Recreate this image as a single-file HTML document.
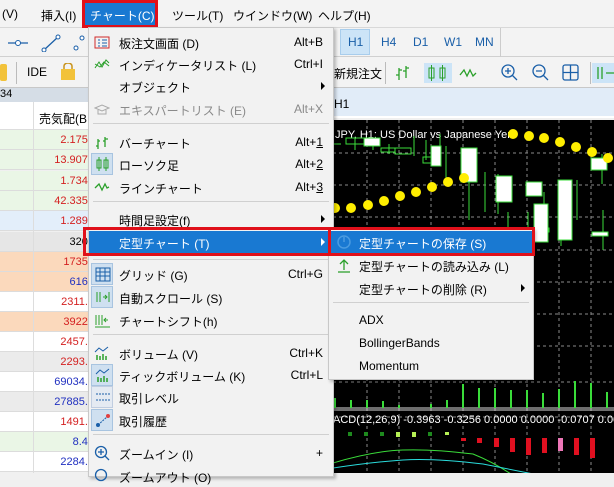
<!DOCTYPE html><html><head><meta charset="utf-8"><style>
*{margin:0;padding:0;box-sizing:border-box}
body{width:614px;height:473px;overflow:hidden;position:relative;background:#f0f0f0;font-family:"Liberation Sans","Noto Sans CJK JP",sans-serif;font-size:12px;color:#000}
.a{position:absolute}
.mb span{position:absolute;top:7px;font-size:12px}
.row{position:absolute;left:0;width:88px;height:20px;border-bottom:1px solid #dcdcdc;text-align:right;font-size:11px;padding-top:4px;overflow:hidden;white-space:nowrap}
.row i{font-style:normal;position:absolute;left:0;width:94px;text-align:right}
.menu{left:88px;top:27px;width:246px;height:450px;background:#f2f2f2;border:1px solid #c8c8c8;box-shadow:2px 2px 3px rgba(0,0,0,.25)}
.it{position:absolute;left:0;width:244px;height:22px;font-size:12px}
.it .t{position:absolute;left:30px;top:4px;white-space:nowrap}
.it .k{position:absolute;right:10px;top:4px}
.ar{position:absolute;right:8px;top:7px;width:0;height:0;border-left:4px solid #000;border-top:4px solid transparent;border-bottom:4px solid transparent}
.sep{position:absolute;left:4px;width:236px;height:1px;background:#d0d0d0}
.ic{position:absolute;left:5px;top:3px;width:16px;height:16px}
.sub{left:328px;top:228px;width:206px;height:152px;background:#f2f2f2;border:1px solid #c8c8c8;box-shadow:2px 2px 3px rgba(0,0,0,.25)}
.g{color:#8a8a8a}
.tb span{position:absolute;font-size:12px}
</style></head><body>
<!-- menu bar -->
<div class="a mb" style="left:0;top:0;width:614px;height:28px;background:#f3f3f3;border-bottom:1px solid #d8d8d8">
<span style="left:2px">(V)</span><span style="left:41px">挿入(I)</span><span style="left:172px">ツール(T)</span><span style="left:233px">ウインドウ(W)</span><span style="left:318px">ヘルプ(H)</span>
<div class="a" style="left:82px;top:0;width:76px;height:28px;border:3px solid #e0101a;background:#1979d2"></div>
<span style="left:90px;color:#fff">チャート(C)</span>
</div>
<!-- toolbar 1 -->
<div class="a tb" style="left:0;top:28px;width:614px;height:29px;background:#f3f3f3;border-bottom:1px solid #d0d0d0">
<svg class="a" style="left:0;top:6px" width="90" height="18"><path d="M8 9h20" stroke="#1a5fa8" stroke-width="1.3"/><circle cx="18" cy="9" r="2.5" fill="#fff" stroke="#1a5fa8"/><path d="M44 16L58 3" stroke="#1a5fa8" stroke-width="1.3"/><circle cx="44" cy="16" r="2" fill="#fff" stroke="#1a5fa8"/><circle cx="58" cy="3" r="2" fill="#fff" stroke="#1a5fa8"/><circle cx="76" cy="14" r="2" fill="#fff" stroke="#1a5fa8"/><circle cx="82" cy="4" r="2" fill="#fff" stroke="#1a5fa8"/></svg>
<div class="a" style="left:340px;top:1px;width:30px;height:26px;background:#cce4f7;border:1px solid #a8cdec"></div>
<span style="left:348px;top:7px;color:#1a5fa8">H1</span><span style="left:381px;top:7px;color:#1a5fa8">H4</span><span style="left:413px;top:7px;color:#1a5fa8">D1</span><span style="left:444px;top:7px;color:#1a5fa8">W1</span><span style="left:475px;top:7px;color:#1a5fa8">MN</span>
<div class="a" style="left:500px;top:0;width:1px;height:29px;background:#ccc"></div>
</div>
<!-- toolbar 2 -->
<div class="a tb" style="left:0;top:57px;width:614px;height:31px;background:#f3f3f3;border-bottom:1px solid #c8c8c8">
<div class="a" style="left:0;top:7px;width:7px;height:17px;background:#f2c23a;border-radius:2px"></div>
<div class="a" style="left:16px;top:5px;width:1px;height:22px;background:#bbb"></div>
<span style="left:27px;top:8px">IDE</span>
<svg class="a" style="left:60px;top:6px" width="16" height="18"><rect x="1" y="6" width="14" height="11" fill="#f2c23a"/><path d="M4 6V3a4 3 0 0 1 8 0v3" stroke="#c8921a" fill="none" stroke-width="1.5"/></svg>
<span style="left:334px;top:8px">新規注文</span>
<div class="a" style="left:385px;top:5px;width:1px;height:22px;background:#bbb"></div>
<svg class="a" style="left:395px;top:6px" width="220" height="20"><path d="M4 5v12M1 12h3M4 7h3M11 3v12M8 8h3M11 5h3" stroke="#2aa02a" stroke-width="1.3" fill="none"/><rect x="29" y="0" width="28" height="22" fill="#cce4f7"/><rect x="34" y="5" width="5" height="10" fill="none" stroke="#2aa02a"/><path d="M36.5 2v16M47.5 2v16" stroke="#2aa02a"/><rect x="45" y="5" width="5" height="10" fill="none" stroke="#2aa02a"/><path d="M65 12l4-5 3 6 3-6 3 6 3-3" stroke="#2aa02a" fill="none" stroke-width="1.3"/><circle cx="113" cy="8" r="6" fill="none" stroke="#1a5fa8" stroke-width="1.3"/><path d="M117 12l5 5M110 8h6M113 5v6" stroke="#1a5fa8" stroke-width="1.3"/><circle cx="144" cy="8" r="6" fill="none" stroke="#1a5fa8" stroke-width="1.3"/><path d="M148 12l5 5M141 8h6" stroke="#1a5fa8" stroke-width="1.3"/><rect x="168" y="2" width="15" height="15" rx="2" fill="none" stroke="#1a5fa8" stroke-width="1.3"/><path d="M175.5 2v15M168 9.5h15" stroke="#1a5fa8" stroke-width="1.3"/><rect x="197" y="0" width="25" height="22" fill="#cce4f7"/><path d="M203 4v12M207 4v12M211 10h8" stroke="#2aa02a" stroke-width="1.3"/></svg>
<div class="a" style="left:590px;top:5px;width:1px;height:22px;background:#bbb"></div>
</div>
<!-- left panel -->
<div class="a" style="left:0;top:88px;width:88px;height:14px;background:#d5dde6;font-size:11px;padding-left:0">34</div>
<div class="a" style="left:0;top:102px;width:88px;height:28px;background:#fff;border-bottom:1px solid #ddd"></div>
<div class="a" style="left:39px;top:110px;font-size:12px">売気配(B</div>
<div class="a" style="left:33px;top:102px;width:1px;height:371px;background:#ddd;z-index:2"></div>
<div class="row" style="top:130px;background:#eaf6e6;color:#d42020"><i>2.1754</i></div>
<div class="row" style="top:150px;background:#eaf6e6;color:#d42020"><i>13.9072</i></div>
<div class="row" style="top:171px;background:#eaf6e6;color:#d42020"><i>1.7342</i></div>
<div class="row" style="top:191px;background:#eaf6e6;color:#d42020"><i>42.3354</i></div>
<div class="row" style="top:211px;background:#e3eefa;color:#d42020"><i>1.2891</i></div>
<div class="row" style="top:232px;background:#e6e6e6;color:#000"><i>3201</i></div>
<div class="row" style="top:252px;background:#fbd9bc;color:#d42020"><i>17359</i></div>
<div class="row" style="top:272px;background:#fbd9bc;color:#2030c0"><i>6166</i></div>
<div class="row" style="top:292px;background:#fff;color:#d42020"><i>2311.6</i></div>
<div class="row" style="top:312px;background:#fbd9bc;color:#d42020"><i>39227</i></div>
<div class="row" style="top:332px;background:#fff;color:#d42020"><i>2457.2</i></div>
<div class="row" style="top:352px;background:#ebebeb;color:#d42020"><i>2293.1</i></div>
<div class="row" style="top:372px;background:#fff;color:#2030c0"><i>69034.0</i></div>
<div class="row" style="top:392px;background:#ebebeb;color:#2030c0"><i>27885.8</i></div>
<div class="row" style="top:412px;background:#fff;color:#d42020"><i>1491.9</i></div>
<div class="row" style="top:432px;background:#eaf6e6;color:#2030c0"><i>8.48</i></div>
<div class="row" style="top:452px;background:#fff;color:#2030c0"><i>2284.9</i></div>
<!-- chart header -->
<div class="a" style="left:330px;top:88px;width:284px;height:30px;background:#e1ecf8;border-bottom:2px solid #fff"></div>
<div class="a" style="left:334px;top:97px;font-size:12px">H1</div>
<!-- chart -->
<svg class="a" style="left:333px;top:120px" width="281" height="353">
<rect width="281" height="353" fill="#000"/>
<g stroke="#8a8a8a" stroke-dasharray="3,3" stroke-width="1"><path d="M34 0v353M66 0v353M98 0v353M130 0v353M162 0v353M194 0v353M226 0v353M258 0v353M0 33h281M0 65h281M0 97h281M0 130h281M0 162h281M0 194h281M0 226h281M0 262h281M0 297h281"/></g>
<text x="2" y="18" fill="#fff" font-size="11" font-family="Liberation Sans">JPY, H1:  US Dollar vs Japanese Yen</text>
<g fill="none" stroke="#3adc3a"><path d="M0 24h8M22 18v12M40 18v12M56 24v10M81 16v20M93 20v20M107 14v30M113 26v40M136 60v40M152 52v40M165 54v40M175 92v40M195 92v40M211 72v40M228 86v40M244 60v40M269 34v30M270 90v40"/><rect x="13" y="18" width="18" height="6"/><rect x="48" y="28" width="14" height="4"/><rect x="62" y="28" width="16" height="6"/><rect x="90" y="37" width="12" height="6" /><rect x="198" y="108" width="18" height="4"/></g>
<g fill="#fff" stroke="#3adc3a"><rect x="31" y="18" width="16" height="8"/><rect x="98" y="26" width="10" height="20"/><rect x="128" y="28" width="16" height="34"/><rect x="163" y="56" width="16" height="26"/><rect x="193" y="62" width="16" height="14"/><rect x="201" y="84" width="14" height="38"/><rect x="258" y="38" width="16" height="12" /><rect x="225" y="60" width="14" height="60"/><rect x="259" y="112" width="16" height="4"/></g>
<g fill="#ffee00"><circle cx="180" cy="14" r="5"/><circle cx="196" cy="16" r="5"/><circle cx="211" cy="18" r="5"/><circle cx="227" cy="22" r="5"/><circle cx="243" cy="27" r="5"/><circle cx="259" cy="32" r="5"/><circle cx="275" cy="38" r="5"/><circle cx="2" cy="88" r="5"/><circle cx="18" cy="88" r="5"/><circle cx="35" cy="85" r="5"/><circle cx="51" cy="81" r="5"/><circle cx="67" cy="76" r="5"/><circle cx="83" cy="72" r="5"/><circle cx="99" cy="67" r="5"/><circle cx="115" cy="62" r="5"/><circle cx="131" cy="58" r="5"/></g>
<path d="M0 288h281M0 290h281" stroke="#ddd"/>
<g stroke="#3adc3a" stroke-width="2"><path d="M2 288v-10M18 288v-8M34 288v-8M50 288v-7M66 288v-3M98 288v-4M114 288v-8M130 288v-24M146 288v-20M162 288v-20M178 288v-18M194 288v-18M210 288v-15M226 288v-19M242 288v-27M258 288v-25M274 288v-16"/></g>
<text x="0" y="303" fill="#fff" font-size="11" font-family="Liberation Sans">ACD(12,26,9) -0.3963 -0.3256 0.0000 0.0000 -0.0707 0.0000</text>
<g fill="#1e8a1e"><rect x="15" y="312" width="4" height="4"/><rect x="31" y="312" width="4" height="4"/><rect x="47" y="312" width="4" height="4"/><rect x="95" y="312" width="4" height="4"/></g>
<g fill="#b6f055"><rect x="63" y="312" width="4" height="5"/><rect x="79" y="312" width="4" height="5"/><rect x="112" y="312" width="4" height="3"/></g>
<g fill="#e01020"><rect x="128" y="318" width="5" height="3"/><rect x="144" y="318" width="5" height="5"/><rect x="161" y="318" width="5" height="9"/><rect x="177" y="318" width="5" height="14"/><rect x="193" y="318" width="5" height="17"/><rect x="209" y="318" width="5" height="15"/><rect x="241" y="318" width="5" height="17"/><rect x="257" y="318" width="5" height="20"/></g>
<rect x="225" y="318" width="5" height="13" fill="#ee77b8"/>
<path d="M0 343q40-12 70-13t70 4q40 16 75 50" stroke="#3adc3a" fill="none"/>
<path d="M0 348q40-6 70-8t80 4q40 8 131 26" stroke="#2adcdc" fill="none"/>
</svg>
<!-- dropdown menu -->
<div class="a menu">
<div class="it" style="top:3px"><svg class="ic"><rect x="1" y="3" width="14" height="11" fill="none" stroke="#d02a2a"/><path d="M4 6h2M8 6h5M4 9h2M8 9h5M4 12h2M8 12h5" stroke="#1a5fa8"/></svg><span class="t">板注文画面 (D)</span><span class="k">Alt+B</span></div>
<div class="it" style="top:25px"><svg class="ic"><path d="M1 12l4-6 3 5 4-7 3 3M1 8l5 3 4-5 5 4" stroke="#2aa02a" fill="none"/></svg><span class="t">インディケータリスト (L)</span><span class="k">Ctrl+I</span></div>
<div class="it" style="top:47px"><span class="t">オブジェクト</span><span class="ar"></span></div>
<div class="it g" style="top:70px"><svg class="ic"><path d="M1 7l7-3 7 3-7 3z M4 9v4h8V9" stroke="#aaa" fill="none"/></svg><span class="t">エキスパートリスト (E)</span><span class="k">Alt+X</span></div>
<div class="sep" style="top:95px"></div>
<div class="it" style="top:103px"><svg class="ic"><path d="M4 5v10M2 12h2M4 7h2M11 3v10M9 7h2M11 5h3" stroke="#2aa02a" stroke-width="1.3" fill="none"/></svg><span class="t">バーチャート</span><span class="k">Alt+<u>1</u></span></div>
<div class="it" style="top:125px"><div class="a" style="left:2px;top:0;width:22px;height:22px;background:#cfe0f0;border:1px solid #a8c4e0"></div><svg class="ic" style="left:6px"><rect x="2" y="4" width="4" height="8" fill="none" stroke="#2aa02a"/><path d="M4 1v14M11 1v14" stroke="#2aa02a"/><rect x="9" y="4" width="4" height="8" fill="none" stroke="#2aa02a"/></svg><span class="t">ローソク足</span><span class="k">Alt+<u>2</u></span></div>
<div class="it" style="top:148px"><svg class="ic"><path d="M1 9l4-4 3 6 3-6 2 4 2-1" stroke="#2aa02a" fill="none" stroke-width="1.3"/></svg><span class="t">ラインチャート</span><span class="k">Alt+<u>3</u></span></div>
<div class="sep" style="top:173px"></div>
<div class="it" style="top:180px"><span class="t">時間足設定(f)</span><span class="ar"></span></div>
<div class="it" style="top:203px;background:#1979d2;color:#fff"><span class="t">定型チャート (T)</span><span class="ar" style="border-left-color:#fff"></span></div>
<div class="sep" style="top:231px"></div>
<div class="it" style="top:235px"><div class="a" style="left:2px;top:0;width:22px;height:22px;background:#cfe0f0;border:1px solid #a8c4e0"></div><svg class="ic" style="left:6px"><path d="M1 2h14v13H1zM1 6h14M1 10h14M5 2v13M10 2v13" stroke="#1a5fa8" fill="none"/></svg><span class="t">グリッド (G)</span><span class="k">Ctrl+G</span></div>
<div class="it" style="top:258px"><div class="a" style="left:2px;top:0;width:22px;height:22px;background:#cfe0f0;border:1px solid #a8c4e0"></div><svg class="ic" style="left:6px"><path d="M2 3v10M5 3v10M8 8h4M10 6l2 2-2 2M14 3v10" stroke="#2aa02a" fill="none"/></svg><span class="t">自動スクロール (S)</span></div>
<div class="it" style="top:281px"><svg class="ic"><path d="M2 3v10M5 3v10M8 3v10M14 8h-4M12 6l-2 2 2 2M1 15h15" stroke="#2aa02a" fill="none"/></svg><span class="t">チャートシフト(h)</span></div>
<div class="sep" style="top:306px"></div>
<div class="it" style="top:314px"><svg class="ic"><path d="M1 7l4-4 4 3 5-4" stroke="#1a5fa8" fill="none"/><path d="M3 15v-5M6 15v-4M9 15v-6M12 15v-4" stroke="#2aa02a" stroke-width="1.5"/></svg><span class="t">ボリューム (V)</span><span class="k">Ctrl+K</span></div>
<div class="it" style="top:336px"><div class="a" style="left:2px;top:0;width:22px;height:22px;background:#cfe0f0;border:1px solid #a8c4e0"></div><svg class="ic" style="left:6px"><path d="M1 7l4-4 4 3 5-4" stroke="#1a5fa8" fill="none"/><path d="M3 15v-5M6 15v-4M9 15v-6M12 15v-4" stroke="#2aa02a" stroke-width="1.5"/></svg><span class="t">ティックボリューム (K)</span><span class="k">Ctrl+L</span></div>
<div class="it" style="top:358px"><div class="a" style="left:2px;top:0;width:22px;height:22px;background:#e4eaf2;border:1px solid #c0cde0"></div><svg class="ic" style="left:6px"><path d="M1 5h14M1 11h14" stroke="#1a5fa8" stroke-dasharray="2,1"/></svg><span class="t">取引レベル</span></div>
<div class="it" style="top:381px"><div class="a" style="left:2px;top:0;width:22px;height:22px;background:#cfe0f0;border:1px solid #a8c4e0"></div><svg class="ic" style="left:6px"><path d="M3 13L13 4" stroke="#1a5fa8" stroke-dasharray="2,1"/><circle cx="3" cy="13" r="2" fill="#1a5fa8"/><circle cx="13" cy="4" r="2" fill="#e04040"/></svg><span class="t">取引履歴</span></div>
<div class="sep" style="top:406px"></div>
<div class="it" style="top:414px"><svg class="ic"><circle cx="7" cy="7" r="5.5" fill="none" stroke="#1a5fa8" stroke-width="1.3"/><path d="M11 11l4 4M4 7h6M7 4v6" stroke="#1a5fa8" stroke-width="1.3"/></svg><span class="t">ズームイン (I)</span><span class="k">+</span></div>
<div class="it" style="top:437px"><svg class="ic"><circle cx="7" cy="7" r="5.5" fill="none" stroke="#1a5fa8" stroke-width="1.3"/></svg><span class="t">ズームアウト (O)</span></div>
</div>
<div class="a" style="left:83px;top:227px;width:251px;height:29px;border:3px solid #e0101a"></div>
<!-- submenu -->
<div class="a sub">
<div class="it" style="top:2px;width:204px;background:#1979d2;color:#fff"><svg class="ic" style="left:7px"><circle cx="8" cy="8" r="6" fill="none" stroke="#4a9be0" stroke-width="1.5"/><path d="M8 3v5" stroke="#4a9be0" stroke-width="1.5"/></svg><span class="t">定型チャートの保存 (S)</span></div>
<div class="it" style="top:25px;width:204px"><svg class="ic" style="left:7px"><path d="M8 13V3M4 7l4-4 4 4M2 15h12" stroke="#2aa02a" fill="none" stroke-width="1.3"/></svg><span class="t">定型チャートの読み込み (L)</span></div>
<div class="it" style="top:48px;width:204px"><span class="t">定型チャートの削除 (R)</span><span class="ar"></span></div>
<div class="sep" style="top:73px;width:196px"></div>
<div class="it" style="top:80px;width:204px"><span class="t">ADX</span></div>
<div class="it" style="top:103px;width:204px"><span class="t">BollingerBands</span></div>
<div class="it" style="top:126px;width:204px"><span class="t">Momentum</span></div>
</div>
<div class="a" style="left:328px;top:227px;width:207px;height:29px;border:3px solid #e0101a"></div>
</body></html>
